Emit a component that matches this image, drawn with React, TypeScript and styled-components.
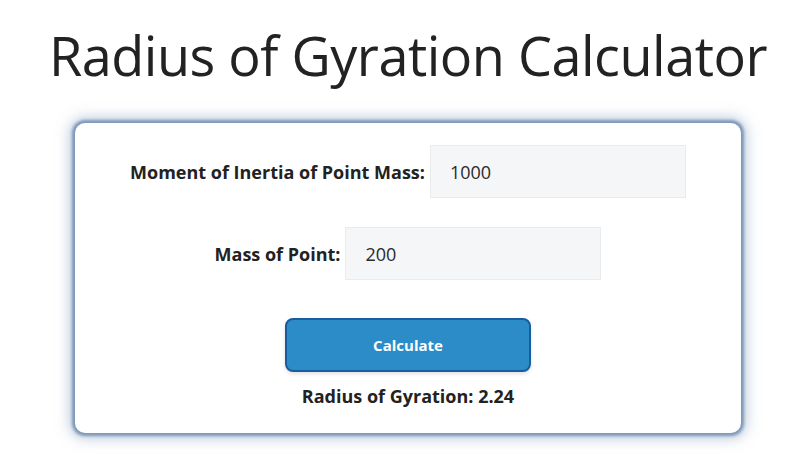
import styled, { createGlobalStyle } from 'styled-components';

const GlobalStyle = createGlobalStyle`
  body {
    margin: 0;
    background: #ffffff;
    font-family: "Open Sans", "Noto Sans", sans-serif;
    color: #222222;
  }
`;

const Page = styled.main`
  display: flex;
  flex-direction: column;
  align-items: center;
  padding: 0 0 31px 13px;
  width: 803px;
  box-sizing: border-box;
`;

const Title = styled.h1`
  margin: 18px 0 0;
  font-size: 54px;
  font-weight: 400;
  line-height: 74px;
  color: #222222;
  letter-spacing: -0.5px;
`;

const Card = styled.section`
  margin-top: 31px;
  width: 666px;
  height: 310px;
  box-sizing: border-box;
  padding-top: 22px;
  background: #ffffff;
  border-radius: 10px;
  box-shadow: 0 0 3px 3px rgba(105, 135, 172, 0.8),
    0 0 14px 5px rgba(120, 150, 185, 0.5);
  display: flex;
  flex-direction: column;
  align-items: center;
`;

const Row = styled.div`
  display: flex;
  align-items: center;
  gap: 5px;
  margin-bottom: ${(p: { $gap: number }) => p.$gap}px;
`;

const Label = styled.label`
  font-size: 18px;
  font-weight: 700;
  color: #222222;
`;

const Input = styled.input`
  width: 256px;
  height: 53px;
  box-sizing: border-box;
  border: 1px solid #e9ebee;
  background: #f5f6f8;
  padding: 0 19px;
  font-family: "Open Sans", "Noto Sans", sans-serif;
  font-size: 18px;
  color: #2a2a2a;
  outline: none;
`;

const Button = styled.button`
  width: 246px;
  height: 54px;
  border: 2px solid #1a5d9f;
  border-radius: 8px;
  background: #2b8cc8;
  color: #ffffff;
  font-family: "Open Sans", "Noto Sans", sans-serif;
  font-size: 15px;
  font-weight: 700;
  box-shadow: 0 2px 4px rgba(0, 0, 0, 0.12);
  cursor: pointer;
`;

const Result = styled.p`
  margin: 12px 0 0;
  font-size: 18px;
  font-weight: 700;
  color: #222222;
`;

export default function App() {
  return (
    <Page>
      <GlobalStyle />
      <Title>Radius of Gyration Calculator</Title>
      <Card>
        <Row $gap={29}>
          <Label>Moment of Inertia of Point Mass:</Label>
          <Input defaultValue="1000" />
        </Row>
        <Row $gap={38}>
          <Label>Mass of Point:</Label>
          <Input defaultValue="200" />
        </Row>
        <Button>Calculate</Button>
        <Result>Radius of Gyration: 2.24</Result>
      </Card>
    </Page>
  );
}
